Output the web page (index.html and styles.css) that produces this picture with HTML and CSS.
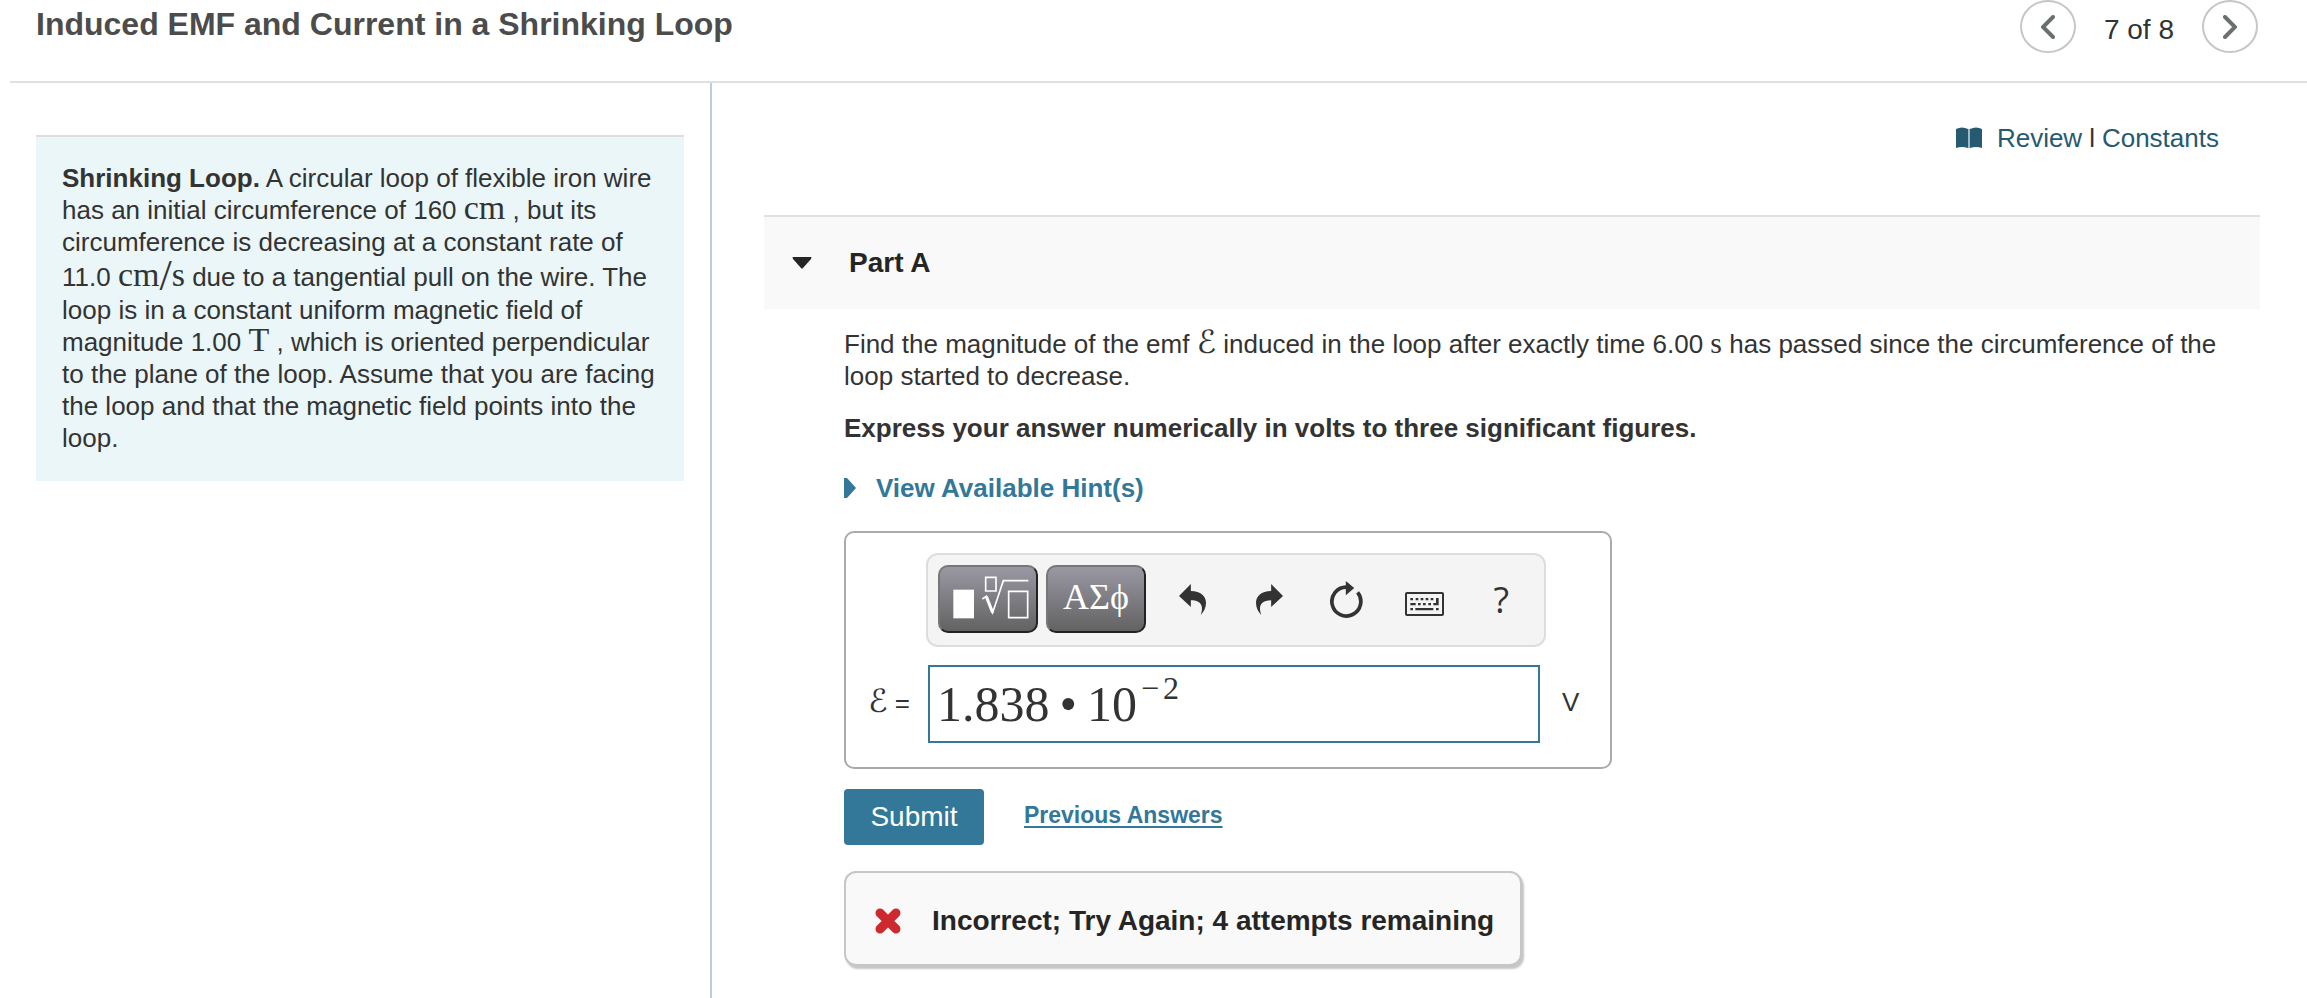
FILE: index.html
```html
<!DOCTYPE html>
<html lang="en">
<head>
    <meta charset="UTF-8">
    <meta name="viewport" content="width=device-width, initial-scale=1.0">
    <title>Induced EMF and Current in a Shrinking Loop</title>
    <link rel="stylesheet" href="styles.css">
</head>
<body>
    <header class="top">
        <h1>Induced EMF and Current in a Shrinking Loop</h1>
        <nav class="pager">
            <button type="button" class="round" aria-label="Previous item">
                <svg width="14" height="24" viewBox="0 0 14 24"><path d="M12 2L2 12l10 10"/></svg>
            </button>
            <span class="count">7 of 8</span>
            <button type="button" class="round" aria-label="Next item">
                <svg width="14" height="24" viewBox="0 0 14 24"><path d="M2 2l10 10L2 22"/></svg>
            </button>
        </nav>
    </header>
    <div class="columns">
        <aside class="side">
            <p class="problem"><b>Shrinking Loop.</b> A circular loop of flexible iron wire has an initial circumference of 160 <span class="math">cm</span> , but its circumference is decreasing at a constant rate of 11.0&nbsp;<span class="math tall">cm<span class="slash">/</span>s</span> due to a tangential pull on the wire. The loop is in a constant uniform magnetic field of magnitude 1.00 <span class="math">T</span> , which is oriented perpendicular to the plane of the loop. Assume that you are facing the loop and that the magnetic field points into the loop.</p>
        </aside>
        <main class="content">
            <div class="links">
                <svg class="book" width="26" height="22" viewBox="0 0 26 22"><path d="M0 2Q6-1 12 2V21Q6 19 0 21zM14 2Q20-1 26 2V21Q20 19 14 21z"/><path class="spine" d="M12 2h2v19h-2z"/></svg>
                <a href="#review">Review</a> <span class="bar">l</span> <a href="#constants">Constants</a>
            </div>
            <section>
                <h2 class="part">
                    <svg width="20" height="12" viewBox="0 0 20 12"><path d="M1 0h18q1 0 0 2l-8 9q-1 1-2 0L1 2Q0 0 1 0z"/></svg>
                    Part A
                </h2>
                <div class="question">
                    <p>Find the magnitude of the emf <span class="emf">ℰ</span> induced in the loop after exactly time 6.00 <span class="unit">s</span> has passed since the circumference of the loop started to decrease.</p>
                    <p><b>Express your answer numerically in volts to three significant figures.</b></p>
                    <a class="hints" href="#hints">
                        <svg width="12" height="20" viewBox="0 0 12 20"><path d="M0 0h3l9 10-9 10H0z"/></svg>
                        View Available Hint(s)
                    </a>
                    <form class="answer">
                        <div class="editor">
                            <div class="toolbar">
                                <button type="button" class="dark" aria-label="Templates">
                                    <svg width="84" height="44" viewBox="0 0 252 132">
                                        <path class="solid" d="M22 44h62v86H22z"/>
                                        <path class="line" d="M119 7h31v41h-31zM188 49h57v79h-57zM109 72l12-8 19 49 32-96h75"/>
                                        <path class="thick" d="M121 65l19 48"/>
                                    </svg>
                                </button>
                                <button type="button" class="dark">ΑΣϕ</button>
                                <div class="tools">
                                    <button type="button" aria-label="Undo">
                                        <svg width="27" height="31" viewBox="0 0 82 94"><path d="M0 36L36 0V21C66 22 82 36 82 58C82 72 76 84 66 94C74 72 72 49 36 49V70z"/></svg>
                                    </button>
                                    <button type="button" aria-label="Redo">
                                        <svg width="27" height="31" viewBox="0 0 82 94"><path d="M82 36L46 0V21C16 22 0 36 0 58C0 72 6 84 16 94C8 72 10 49 46 49V70z"/></svg>
                                    </button>
                                    <button type="button" aria-label="Reset">
                                        <svg class="reset" width="33" height="37" viewBox="0 0 98 110"><path d="M47 0l25 21-25 21z"/><path class="ring" d="M48 18A43 43 0 1 0 82 34"/></svg>
                                    </button>
                                    <button type="button" aria-label="Keyboard shortcuts">
                                        <svg class="keys" width="39" height="24" viewBox="0 0 117 72">
                                            <rect class="frame" x="3" y="3" width="111" height="66" rx="3"/>
                                            <path d="M16 18h8v7h-8zM32 18h8v7h-8zM47 18h8v7h-8zM62 18h8v7h-8zM77 18h8v7h-8zM93 18h8v22H85v-7h8zM16 33h16v7H16zM39 33h8v7h-8zM54 33h8v7h-8zM70 33h8v7h-8zM16 48h8v7h-8zM31 48h54v7H31zM93 48h8v7h-8z"/>
                                        </svg>
                                    </button>
                                    <button type="button" class="help" aria-label="Help">?</button>
                                </div>
                            </div>
                            <span class="prefix" id="emf-label"><span class="emf">ℰ</span> =</span>
                            <div class="field" role="textbox" contenteditable="true" spellcheck="false" aria-labelledby="emf-label">1.838<span class="dot">•</span>10<sup>−<span class="power">2</span></sup></div>
                            <span class="volts">V</span>
                        </div>
                        <div class="actions">
                            <button type="submit" class="submit">Submit</button>
                            <a href="#previous">Previous Answers</a>
                        </div>
                    </form>
                    <div class="feedback" role="status">
                        <svg width="28" height="28" viewBox="0 0 28 28"><path d="M6 6l16 16M22 6L6 22"/></svg>
                        Incorrect; Try Again; 4 attempts remaining
                    </div>
                </div>
            </section>
        </main>
    </div>
</body>
</html>
```
FILE: styles.css
```css
* {
    box-sizing: border-box;
}
body {
    margin: 0;
    background: #fff;
    color: #333;
    font-family: "Liberation Sans", Arial, sans-serif;
    font-size: 26px;
    line-height: 32px;
}
h1, h2, p {
    margin: 0;
}
button {
    font-family: inherit;
    padding: 0;
    cursor: pointer;
}
svg {
    display: block;
    flex: none;
}

/* header */
.top {
    display: flex;
    justify-content: space-between;
    align-items: flex-start;
    height: 83px;
    margin-left: 10px;
    padding: 0 49px 0 26px;
    border-bottom: 2px solid #e0e0e0;
}
.top h1 {
    padding-top: 4px;
    color: #4c4c4c;
    font-size: 32px;
    line-height: 40px;
}
.pager {
    display: flex;
    align-items: center;
    gap: 28px;
}
.round {
    display: flex;
    align-items: center;
    justify-content: center;
    width: 56px;
    height: 53px;
    border: 2px solid #c6c6c6;
    border-radius: 50%;
    background: #fff;
}
.round path {
    fill: none;
    stroke: #6a7070;
    stroke-width: 4;
    stroke-linecap: round;
}
.count {
    padding-top: 6px;
    font-size: 28px;
}

/* two panes */
.columns {
    display: flex;
    min-height: calc(100vh - 83px);
}
.side {
    flex: none;
    width: 712px;
    padding: 52px 26px 0 36px;
    border-right: 2px solid #c0cbdb;
}
.problem {
    padding: 25px 26px 27px;
    border-top: 2px solid #dedede;
    background: #eaf6f8;
}
.math {
    font-family: "Liberation Serif", serif;
    font-size: 34px;
    line-height: 24px;
}
.tall {
    display: inline-block;
    padding-bottom: 2px;
    line-height: 34px;
}
.slash {
    font-size: 44px;
    line-height: 0;
    vertical-align: -4px;
}
.unit {
    font-family: "Liberation Serif", serif;
    font-size: 30px;
    line-height: 24px;
}
.emf {
    font-family: "DejaVu Sans", sans-serif;
    font-size: 32px;
    line-height: 24px;
}
.content {
    flex: 1;
    padding: 39px 47px 0 52px;
}
.links {
    display: flex;
    justify-content: flex-end;
    align-items: center;
    gap: 7px;
    padding-right: 41px;
    margin-bottom: 61px;
}
.links a {
    color: #255a70;
    text-decoration: none;
}
.book {
    margin-right: 8px;
    fill: #255a70;
}
.book .spine {
    fill: #9dbac6;
}
.part {
    display: flex;
    align-items: center;
    gap: 37px;
    height: 94px;
    padding-left: 28px;
    border-top: 2px solid #e0e0e0;
    background: #f9f9f9;
    color: #252525;
    font-size: 28px;
}
.part svg {
    fill: #252525;
}
.question {
    padding: 19px 0 24px 80px;
}
.question p {
    margin-bottom: 20px;
}
.hints {
    display: inline-flex;
    align-items: center;
    gap: 20px;
    margin: 8px 0 27px;
    color: #337799;
    font-weight: bold;
    text-decoration: none;
    vertical-align: top;
}
.hints svg {
    fill: #337799;
}

/* answer box */
.editor {
    display: grid;
    grid-template-columns: 64px 612px 1fr;
    column-gap: 18px;
    row-gap: 18px;
    align-items: center;
    width: 768px;
    padding: 20px 0 24px;
    border: 2px solid #aaa;
    border-radius: 10px;
}
.toolbar {
    grid-column: 2 / 4;
    display: flex;
    gap: 8px;
    width: 620px;
    margin-left: -2px;
    padding: 10px 4px 12px 10px;
    border: 2px solid #ddd;
    border-radius: 12px;
    background: #f4f4f4;
}
.dark {
    display: flex;
    align-items: center;
    justify-content: center;
    flex: none;
    width: 100px;
    height: 68px;
    padding-bottom: 4px;
    border: 2px solid;
    border-color: #777 #222 #222 #777;
    border-radius: 10px;
    background: linear-gradient(#9a98a3, #626262);
    color: #fff;
    font-family: "Liberation Serif", serif;
    font-size: 36px;
}
.solid {
    fill: #fff;
}
.line {
    fill: none;
    stroke: #fff;
    stroke-width: 5;
}
.thick {
    stroke: #fff;
    stroke-width: 9;
}
.tools {
    flex: 1;
    display: grid;
    grid-template-columns: repeat(5, 1fr);
}
.tools button {
    display: flex;
    align-items: center;
    justify-content: center;
    border: 0;
    background: none;
    color: #333;
}
.tools svg {
    fill: #333;
}
.tools .ring {
    fill: none;
    stroke: #333;
    stroke-width: 11;
}
.tools .frame {
    fill: none;
    stroke: #333;
    stroke-width: 6;
}
.keys {
    margin-top: 10px;
}
.tools .help {
    font-family: "Open Sans", sans-serif;
    font-size: 36px;
}
.prefix {
    padding-bottom: 2px;
    text-align: right;
    white-space: nowrap;
}
.field {
    height: 78px;
    padding: 0 7px;
    border: 2px solid #337799;
    font-family: "Liberation Serif", serif;
    font-size: 50px;
    line-height: 74px;
    white-space: nowrap;
    outline: none;
}
.dot {
    margin: 0 10px;
}
.field sup {
    margin-left: 4px;
    font-size: 32px;
    line-height: 0;
    vertical-align: 22px;
}
.power {
    margin-left: 4px;
}
.volts {
    margin-left: 4px;
    padding-bottom: 4px;
}
.actions {
    display: flex;
    align-items: center;
    gap: 40px;
    margin: 20px 0 26px;
}
.submit {
    width: 140px;
    height: 56px;
    border: 0;
    border-radius: 4px;
    background: #337799;
    color: #fff;
    font-size: 28px;
}
.actions a {
    padding-bottom: 4px;
    color: #337799;
    font-size: 23px;
    font-weight: bold;
    text-decoration-thickness: 2px;
    text-underline-offset: 3px;
}
.feedback {
    display: inline-flex;
    align-items: center;
    gap: 30px;
    height: 95px;
    padding: 4px 26px 0 28px;
    border: 2px solid #c6c6c6;
    border-radius: 12px;
    background: #f9f9f9;
    box-shadow: 2px 3px 2px #c6c6c6;
    color: #252525;
    font-size: 28px;
    font-weight: bold;
}
.feedback path {
    stroke: #cc2a2e;
    stroke-width: 9;
    stroke-linecap: round;
}
```
